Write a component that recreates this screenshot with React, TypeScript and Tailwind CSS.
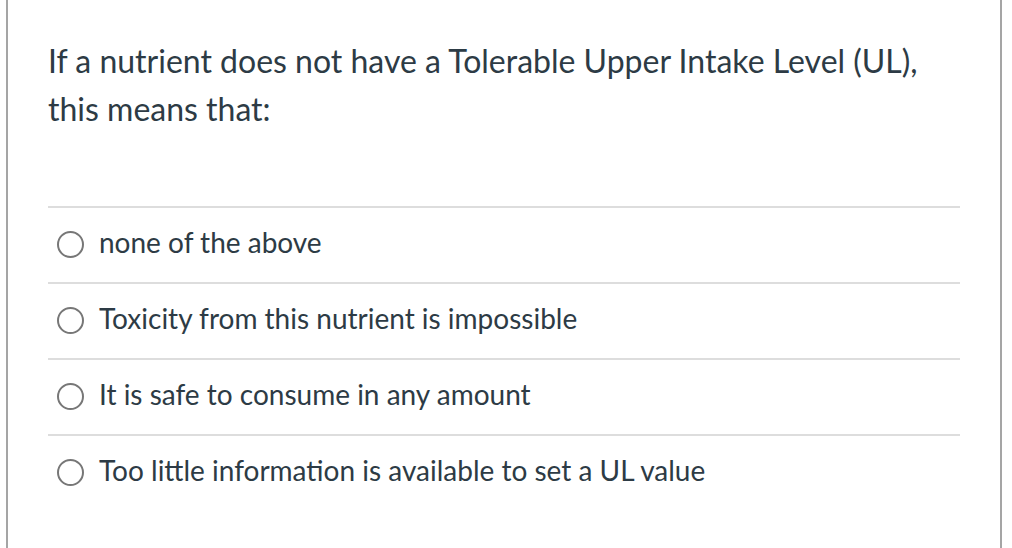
import React from 'react';

const answers = [
  'none of the above',
  'Toxicity from this nutrient is impossible',
  'It is safe to consume in any amount',
  'Too little information is available to set a UL value',
];

export default function App() {
  return (
    <div className="w-[1012px] h-[548px] overflow-hidden bg-white font-['Lato',sans-serif] text-[#2d3b45]">
      <div className="ml-[6px] w-[996px] h-[548px] border-l-2 border-r-2 border-[#a5a5a5] pl-[40px] pr-[40px]">
        <div className="pt-[37px] text-[32px] leading-[48px] h-[206px]">
          If a nutrient does not have a Tolerable Upper Intake Level (UL), this means that:
        </div>
        {answers.map((a) => (
          <div key={a} className="border-t-2 border-[#dddddd] h-[76px] flex items-center pl-[9px] gap-[15px] pb-[6px]">
            <span className="w-[27px] h-[27px] rounded-full border-2 border-[#777777] shrink-0 mt-[5px]" />
            <span className="text-[28px]">{a}</span>
          </div>
        ))}
      </div>
    </div>
  );
}
